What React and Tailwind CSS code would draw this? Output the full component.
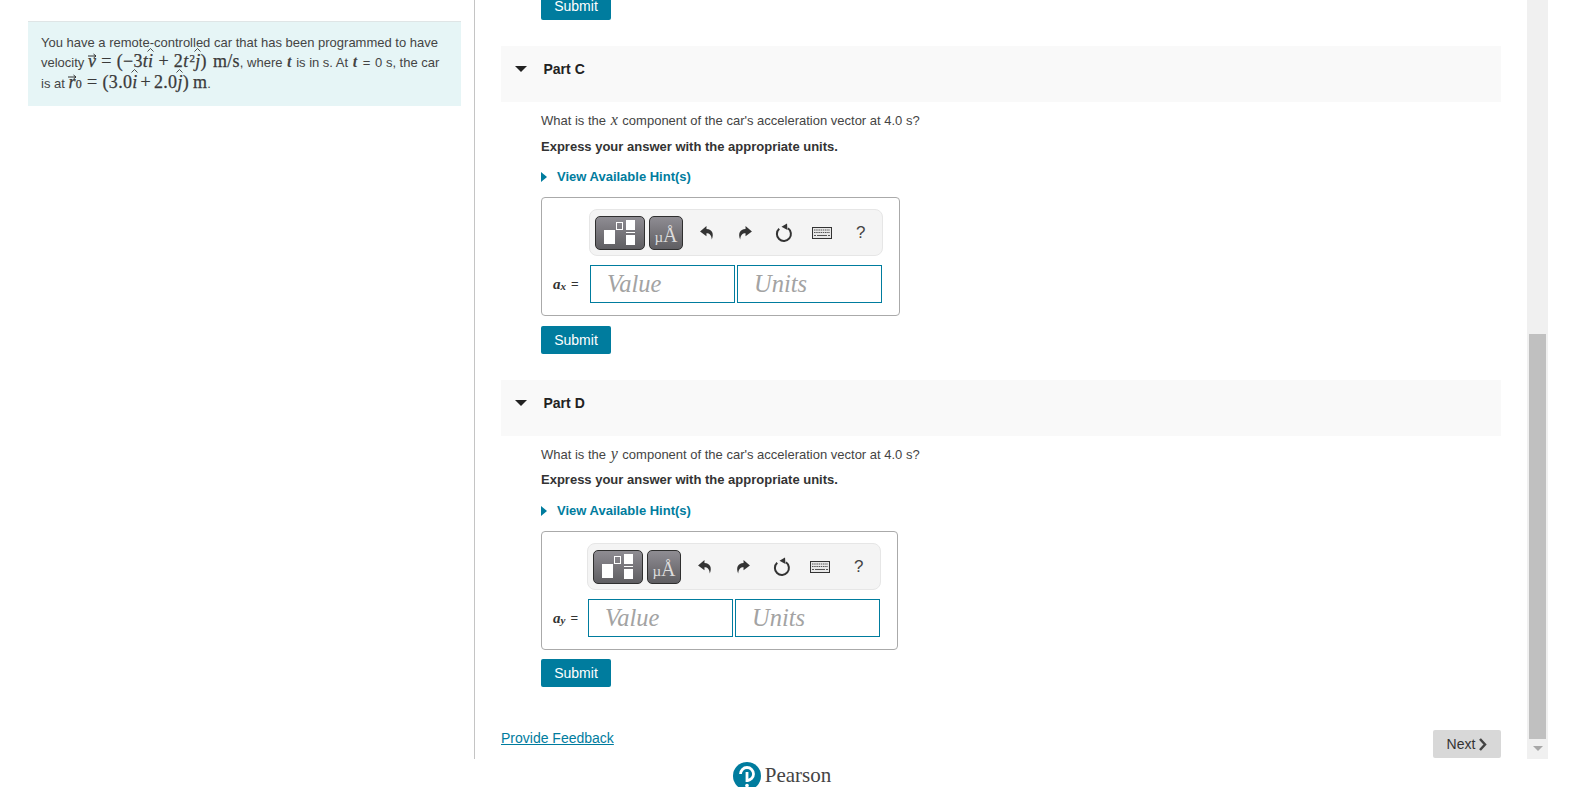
const serif = 'font-["Liberation_Serif",serif]'

// letter with a small mark floating above it (hat or vector arrow)
const Hat = ({ children }) => (
    <span className="relative inline-block">
        <i>{children}</i>
        <svg className="absolute left-[-1px] top-[-3px]" width="7" height="4" viewBox="0 0 7 4">
            <path d="M0.500 3.500L3.500 0.500l3 3" fill="none" stroke="#3a3a3a" strokeWidth="0.900" />
        </svg>
    </span>
)

const Vec = ({ children }) => (
    <span className="relative inline-block">
        <i>{children}</i>
        <svg className="absolute left-[0px] top-[2px]" width="9" height="6" viewBox="0 0 9 6">
            <path d="M0 3h8M5.500 1l2.500 2-2.500 2" fill="none" stroke="#333" strokeWidth="1" />
        </svg>
    </span>
)

const MathText = ({ children }) => (
    <span className={`${serif} text-[18px] tracking-[0.3px] text-[#3a3a3a] [-webkit-text-stroke:0.25px_#3a3a3a]`}>{children}</span>
)

const Op = ({ children, className }) => <span className={className}>{children}</span>

const TemplateIcon = () => (
    <svg width="32" height="26" viewBox="0 0 32 26" fill="none">
        <rect x="0" y="10" width="11" height="14" fill="#fff" />
        <rect x="12.500" y="2.500" width="6" height="7" stroke="#fff" />
        <rect x="22" y="0" width="9" height="10" fill="#fff" />
        <rect x="22" y="12" width="9" height="1" fill="#fff" />
        <rect x="22" y="15" width="9" height="10" fill="#fff" />
    </svg>
)

const UndoIcon = ({ className }) => (
    <svg className={className} width="16" height="16" viewBox="0 0 15 15">
        <path d="M7 1L1 6l6 4.500V7.800c3 0 4.500 1.700 5 5.700 2.300-5 0.500-9.500-5-9.700z" fill="#333" />
    </svg>
)

const ResetIcon = () => (
    <svg width="18" height="20" viewBox="0 0 18 20" fill="none">
        <path d="M4.200 5.800a7 7 0 1 0 8.800 -0.500" stroke="#333" strokeWidth="2" />
        <path d="M6.500 3.800L12 0.500l0.500 6.500z" fill="#333" />
    </svg>
)

const KeyboardIcon = () => (
    <svg width="20" height="12" viewBox="0 0 20 12" fill="none">
        <rect x="0.500" y="0.500" width="19" height="11" fill="#e8e8e8" stroke="#333" />
        <path d="M2 3h16M2 5.500h16" stroke="#555" strokeWidth="1.200" strokeDasharray="1.500 0.700" />
        <path d="M2 8.500h2M5 8.500h10M16 8.500h2" stroke="#555" strokeWidth="1.200" />
    </svg>
)

const MathToolbar = ({ indent }) => (
    <div className={`flex h-[47px] w-[294px] items-center rounded-lg border border-[#e6e6e6] bg-[#f4f4f4] pl-[5px] ${indent}`}>
        <button className="flex h-[34px] w-[50px] items-center justify-center rounded-[5px] border border-[#2f2f2f] bg-gradient-to-b from-[#8f8d93] to-[#5f5e62]">
            <TemplateIcon />
        </button>
        <button className={`ml-[4px] flex h-[34px] w-[34px] items-baseline justify-center rounded-[5px] border border-[#2f2f2f] bg-gradient-to-b from-[#8f8d93] to-[#5f5e62] pt-[3px] text-[#dddddd] ${serif}`}>
            <span className="text-[15px]">µ</span>
            <span className="text-[20px]">Å</span>
        </button>
        <UndoIcon className="ml-[16px]" />
        <UndoIcon className="ml-[22px] -scale-x-100" />
        <span className="ml-[22px] flex"><ResetIcon /></span>
        <span className="ml-[19px] flex"><KeyboardIcon /></span>
        <span className="ml-[24px] text-[17px] text-[#444]">?</span>
    </div>
)

const AnswerInput = ({ placeholder }) => (
    <div className={`flex h-[38px] w-[145px] items-center border border-[#007c9e] bg-white pl-[16px] text-[24.500px] italic text-[#a3a3a3] ${serif}`}>
        {placeholder}
    </div>
)

const PartSection = ({ part, axis, sub, boxWidth, labelWidth, indent, expressGap, hintGap, submitGap }) => (
    <section>
        <div className="ml-[26px] flex h-[56px] w-[1000px] items-start bg-[#f9f9f9] pt-[15px]">
            <span className="ml-[14px] mt-[5px] h-0 w-0 border-x-[6px] border-t-[6px] border-x-transparent border-t-[#222]" />
            <h2 className="-mt-[2px] ml-[16.500px] text-[14px] font-bold text-[#222]">Part {part}</h2>
        </div>
        <div className="ml-[66px]">
            <p className="mt-[10px] text-[13px] leading-[16px] text-[#444]">
                What is the <i className={`${serif} mx-[1px] text-[16px]`}>{axis}</i> component of the car's acceleration vector at 4.0 s?
            </p>
            <p className={`${expressGap} text-[13px] font-bold leading-[16px] text-[#333]`}>Express your answer with the appropriate units.</p>
            <div className={`${hintGap} flex items-center text-[13px] font-bold leading-[16px] text-[#007c9e]`}>
                <span className="h-0 w-0 border-y-[5px] border-l-[6px] border-y-transparent border-l-[#007c9e]" />
                <span className="ml-[10px]">View Available Hint(s)</span>
            </div>
            <div className={`mt-[12px] h-[119px] rounded-[4px] border border-[#aaaaaa] bg-white pt-[11px] ${boxWidth}`}>
                <MathToolbar indent={indent} />
                <div className="mt-[9px] flex items-center">
                    <div className={`flex items-center pl-[11px] text-[13px] text-[#333] ${labelWidth}`}>
                        <i className={`${serif} text-[15px] font-bold`}>a</i>
                        <i className={`${serif} mt-[4px] text-[11px] font-bold`}>{sub}</i>
                        <span className="ml-[5px]">=</span>
                    </div>
                    <AnswerInput placeholder="Value" />
                    <div className="ml-[2px]"><AnswerInput placeholder="Units" /></div>
                </div>
            </div>
            <SubmitButton className={submitGap} />
        </div>
    </section>
)

const SubmitButton = ({ className = '' }) => (
    <button className={`block h-[28px] w-[70px] rounded-[2px] bg-[#007c9e] text-[14px] text-white ${className}`}>Submit</button>
)

const PearsonLogo = () => (
    <svg width="28" height="28" viewBox="0 0 28 28" fill="none">
        <circle cx="14" cy="14" r="14" fill="#007c9e" />
        <path d="M7.500 12a6.500 6.500 0 1 1 6.500 6.500" stroke="#fff" strokeWidth="2.800" />
        <path d="M14 10v10" stroke="#fff" strokeWidth="2.800" />
        <circle cx="14" cy="23.500" r="1.800" fill="#fff" />
    </svg>
)

export default function App() {
    return (
        <div className='h-[787px] w-[1570px] overflow-hidden bg-white font-["Liberation_Sans",sans-serif]'>
            <div className="flex h-[759px]">
                {/* question statement */}
                <aside className="h-full w-[475px] shrink-0 border-r border-[#c4c4c4] pl-[28px] pt-[21px]">
                    <div className="h-[85px] w-[433px] border-t border-[#dfe5e6] bg-[#e6f5f6] px-[13px] pt-[11px] text-[13px] text-[#444]">
                        <p className="h-[18px] leading-[20px]">You have a remote-controlled car that has been programmed to have</p>
                        <p className="h-[20.500px] whitespace-nowrap leading-[20px]">
                            velocity <MathText><Vec>v</Vec><Op className="mx-[5px]">=</Op>(−3<i>t</i><Hat>i</Hat><Op className="mx-[5px]">+</Op>2<i>t</i><sup className="ml-[1px] text-[11px] leading-none">2</sup><Hat>j</Hat>)<Op className="ml-[6px]">m/s</Op></MathText>, where <i className={`${serif} mx-[1px] text-[16px] font-bold`}>t</i> is in s. At <i className={`${serif} mx-[1px] text-[16px] font-bold`}>t</i><Op className="mx-[1px]"> = </Op>0 s, the car
                        </p>
                        <p className="h-[20.500px] whitespace-nowrap leading-[20px]">
                            is at <MathText><Vec>r</Vec><span className="text-[12px]">0</span><Op className="mx-[5px]">=</Op>(3.0<Hat>i</Hat><Op className="mx-[3px]">+</Op>2.0<Hat>j</Hat>)<Op className="ml-[4px]">m</Op></MathText>.
                        </p>
                    </div>
                </aside>

                {/* parts */}
                <main className="relative w-[1052px] shrink-0 overflow-hidden">
                    <div className="-mt-[8px] ml-[66px]"><SubmitButton /></div>
                    <div className="mt-[26px]">
                        <PartSection part="C" axis="x" sub="x" boxWidth="w-[359px]" labelWidth="w-[48px]" indent="ml-[47px]" expressGap="mt-[10px]" hintGap="mt-[14px]" submitGap="mt-[10px]" />
                    </div>
                    <div className="mt-[26px]">
                        <PartSection part="D" axis="y" sub="y" boxWidth="w-[357px]" labelWidth="w-[46px]" indent="ml-[45px]" expressGap="mt-[9px]" hintGap="mt-[15px]" submitGap="mt-[9px]" />
                    </div>
                    <div className="ml-[26px] mt-[43px] flex w-[1000px] items-start justify-between">
                        <a className="text-[14px] leading-[16px] text-[#007c9e] underline">Provide Feedback</a>
                        <button className="flex h-[28px] w-[68px] items-center justify-center rounded-[2px] bg-[#d8d8d8] text-[14px] text-[#333]">
                            Next
                            <svg className="ml-[3px]" width="9" height="13" viewBox="0 0 9 13">
                                <path d="M2 1l5 5.500-5 5.500" fill="none" stroke="#444" strokeWidth="2.500" />
                            </svg>
                        </button>
                    </div>
                </main>

                {/* scrollbar */}
                <div className="flex h-full w-[21px] shrink-0 flex-col items-center bg-[#f0f0f0]">
                    <div className="h-[334px]" />
                    <div className="h-[405px] w-[17px] bg-[#c0c0c0]" />
                    <span className="mt-[7px] h-0 w-0 border-x-[5px] border-t-[5px] border-x-transparent border-t-[#a8a8a8]" />
                </div>
            </div>

            <footer className="flex justify-center">
                <div className="ml-[-6px] mt-[1px] flex items-center">
                    <PearsonLogo />
                    <span className={`ml-[4px] text-[21px] text-[#444] ${serif}`}>Pearson</span>
                </div>
            </footer>
        </div>
    )
}
